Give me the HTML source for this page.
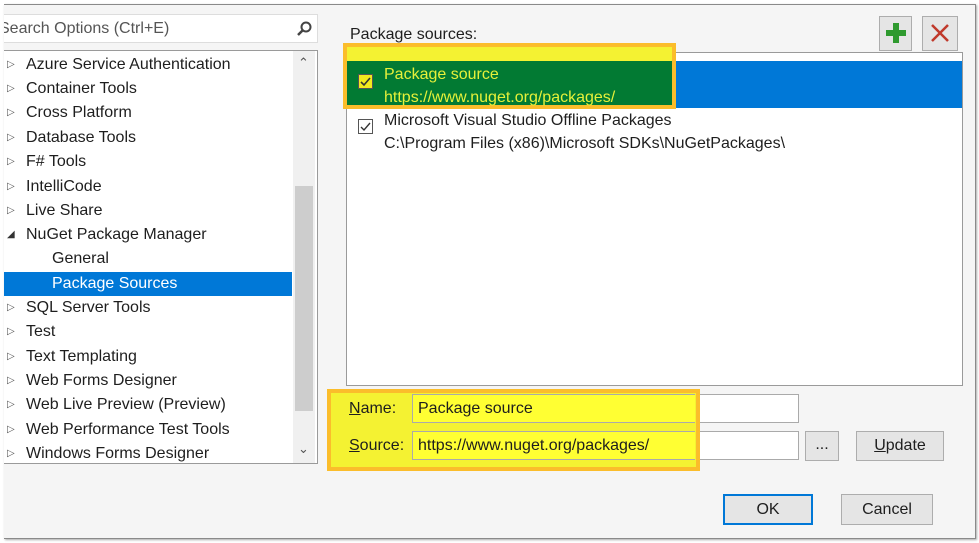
<!DOCTYPE html>
<html><head><style>
*{box-sizing:border-box;margin:0;padding:0}
body{width:979px;height:543px;background:#fff;font-family:"Liberation Sans",sans-serif;font-size:16px;color:#1e1e1e;position:relative;overflow:hidden}
.a{position:absolute}
.frame{left:4px;top:4px;width:972px;height:535px;background:#f5f5f5;border:1px solid #8a8a8a;border-left:none;box-shadow:1px 1px 2px #aaa}
.row{position:absolute;left:0;height:24px;line-height:24px;white-space:nowrap}
.tri{position:absolute;left:3px;top:0;font-size:10px;color:#555}
.btn{position:absolute;background:#e5e5e5;border:1px solid #adadad;text-align:center;font-size:16px}
.inp{position:absolute;background:#fff;border:1px solid #aaa;padding-left:5px;line-height:26px;height:29px}
</style></head><body>
<div class="a frame"></div>
<div class="a" style="left:4px;top:14px;width:314px;height:29px;background:#fff;border:1px solid #ddd;border-left:none;line-height:27px;color:#555;overflow:hidden"><span style="margin-left:-5px">Search Options (Ctrl+E)</span>
<svg class="a" style="left:292px;top:6px" width="16" height="16"><circle cx="10" cy="6" r="4.5" fill="none" stroke="#444" stroke-width="2"/><line x1="7" y1="9" x2="2" y2="14" stroke="#444" stroke-width="2.5"/></svg></div>
<div class="a" style="left:4px;top:50px;width:314px;height:414px;background:#fff;border:1px solid #9a9a9a;border-left:none;overflow:hidden">
<div class="a" style="left:289px;top:0;width:22px;height:412px;background:#f0f0f0"></div>
<div class="a" style="left:291px;top:135px;width:18px;height:225px;background:#cdcdcd"></div>
<div class="a" style="left:294px;top:4px;font-size:13px;color:#555">&#8963;</div>
<div class="a" style="left:294px;top:390px;font-size:13px;color:#555">&#8964;</div>
<div class="row" style="top:2px;left:22px">Azure Service Authentication</div><span class="tri a" style="top:8px">&#9655;</span>
<div class="row" style="top:26px;left:22px">Container Tools</div><span class="tri a" style="top:32px">&#9655;</span>
<div class="row" style="top:50px;left:22px">Cross Platform</div><span class="tri a" style="top:56px">&#9655;</span>
<div class="row" style="top:75px;left:22px">Database Tools</div><span class="tri a" style="top:81px">&#9655;</span>
<div class="row" style="top:99px;left:22px">F# Tools</div><span class="tri a" style="top:105px">&#9655;</span>
<div class="row" style="top:124px;left:22px">IntelliCode</div><span class="tri a" style="top:130px">&#9655;</span>
<div class="row" style="top:148px;left:22px">Live Share</div><span class="tri a" style="top:154px">&#9655;</span>
<div class="row" style="top:172px;left:22px">NuGet Package Manager</div><span class="tri a" style="top:178px;color:#333">&#9698;</span>
<div class="row" style="top:196px;left:48px">General</div>
<div class="a" style="left:0;top:221px;width:288px;height:24px;background:#0078d7"></div>
<div class="row" style="top:221px;left:48px;color:#fff">Package Sources</div>
<div class="row" style="top:245px;left:22px">SQL Server Tools</div><span class="tri a" style="top:251px">&#9655;</span>
<div class="row" style="top:269px;left:22px">Test</div><span class="tri a" style="top:275px">&#9655;</span>
<div class="row" style="top:294px;left:22px">Text Templating</div><span class="tri a" style="top:300px">&#9655;</span>
<div class="row" style="top:318px;left:22px">Web Forms Designer</div><span class="tri a" style="top:324px">&#9655;</span>
<div class="row" style="top:342px;left:22px">Web Live Preview (Preview)</div><span class="tri a" style="top:348px">&#9655;</span>
<div class="row" style="top:367px;left:22px">Web Performance Test Tools</div><span class="tri a" style="top:373px">&#9655;</span>
<div class="row" style="top:391px;left:22px">Windows Forms Designer</div><span class="tri a" style="top:397px">&#9655;</span>
</div>
<div class="a" style="left:350px;top:26px">Package sources:</div>
<div class="btn" style="left:879px;top:16px;width:33px;height:35px"><svg width="22" height="22" style="margin-top:5px"><path d="M8 1h6v7h7v6h-7v7H8v-7H1V8h7z" fill="#2f9a2f"/></svg></div>
<div class="btn" style="left:922px;top:16px;width:36px;height:35px"><svg width="22" height="22" style="margin-top:5px"><path d="M3 3L19 19M19 3L3 19" stroke="#c0392b" stroke-width="2.5"/></svg></div>
<div class="a" style="left:346px;top:52px;width:617px;height:334px;background:#fff;border:1px solid #9a9a9a"></div>
<div class="a" style="left:347px;top:61px;width:615px;height:47px;background:#0078d7"></div>
<div class="a" style="left:343px;top:43px;width:333px;height:66px;border:4px solid #fbbd2b;background:#f4f232"></div>
<div class="a" style="left:347px;top:61px;width:325px;height:44px;background:#027a33"></div>
<div class="a" style="left:358px;top:74px;width:15px;height:15px;background:#f2ea1e;border:1px solid #555"><svg width="13" height="13" style="position:absolute;left:0;top:0"><path d="M2 7l3 3 6-7" fill="none" stroke="#333" stroke-width="1.6"/></svg></div>
<div class="a" style="left:384px;top:63px;color:#e6f03a;line-height:23px">Package source<br>https://www.nuget.org/packages/</div>
<div class="a" style="left:358px;top:119px;width:15px;height:15px;background:#fff;border:1px solid #555"><svg width="13" height="13" style="position:absolute;left:0;top:0"><path d="M2 7l3 3 6-7" fill="none" stroke="#333" stroke-width="1.4"/></svg></div>
<div class="a" style="left:384px;top:109px;line-height:23px">Microsoft Visual Studio Offline Packages<br>C:\Program Files (x86)\Microsoft SDKs\NuGetPackages\</div>
<div class="inp" style="left:412px;top:394px;width:387px"></div>
<div class="inp" style="left:412px;top:431px;width:387px"></div>
<div class="a" style="left:327px;top:389px;width:373px;height:82px;border:4px solid #fbbd2b;background:#f4f232"></div>
<div class="a" style="left:412px;top:394px;width:283px;height:29px;background:#ffff33;border:1px solid #aaa;border-right:none;padding-left:5px;line-height:27px">Package source</div>
<div class="a" style="left:412px;top:431px;width:283px;height:29px;background:#ffff33;border:1px solid #aaa;border-right:none;padding-left:5px;line-height:27px">https://www.nuget.org/packages/</div>
<div class="a" style="left:349px;top:400px"><u>N</u>ame:</div>
<div class="a" style="left:349px;top:437px"><u>S</u>ource:</div>
<div class="btn" style="left:805px;top:431px;width:34px;height:30px;line-height:26px">...</div>
<div class="btn" style="left:856px;top:431px;width:88px;height:30px;line-height:28px"><u>U</u>pdate</div>
<div class="btn" style="left:723px;top:494px;width:90px;height:31px;line-height:27px;border:2px solid #0078d7">OK</div>
<div class="btn" style="left:841px;top:494px;width:92px;height:31px;line-height:29px">Cancel</div>
</body></html>
